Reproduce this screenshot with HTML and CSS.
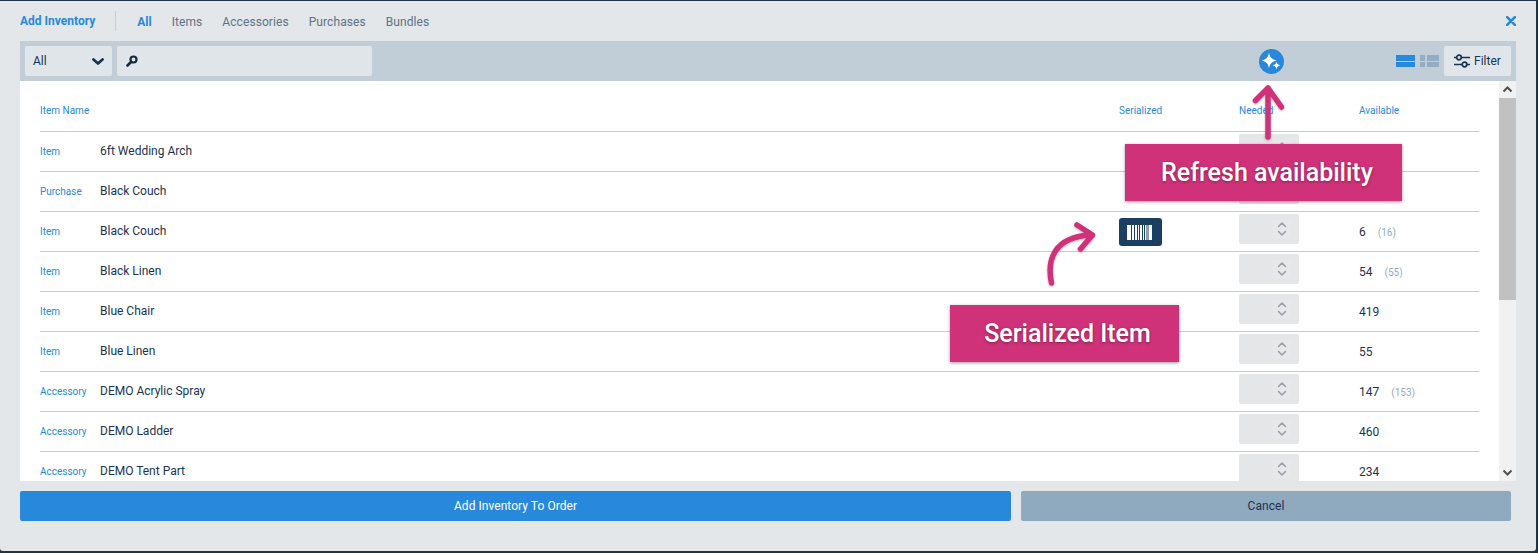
FILE: index.html
```html
<!DOCTYPE html>
<html lang="en">
<head>
<meta charset="utf-8">
<title>Add Inventory</title>
<link rel="stylesheet" href="styles.css">
</head>
<body>
<svg class="defs" width="0" height="0" aria-hidden="true">
  <symbol id="spin" viewBox="0 0 18 18">
    <path d="M5.500 6.500 9 3l3.500 3.500M5.500 11.500 9 15l3.500-3.500" fill="none" stroke="#9a9ca6" stroke-width="1.500" stroke-linecap="round" stroke-linejoin="round"/>
  </symbol>
</svg>
<main class="modal">
  <header class="topbar">
    <h1 class="title">Add Inventory</h1>
    <nav class="tabs">
      <a class="tab active">All</a>
      <a class="tab">Items</a>
      <a class="tab">Accessories</a>
      <a class="tab">Purchases</a>
      <a class="tab">Bundles</a>
    </nav>
    <svg class="close" viewBox="0 0 10 10" width="10" height="10"><path d="M1.200 1.200l7.600 7.600M8.800 1.200 1.200 8.800" stroke="#2889dc" stroke-width="2.600" stroke-linecap="round"/></svg>
  </header>

  <section class="toolbar">
    <div class="select">
      <span>All</span>
      <svg viewBox="0 0 12 7" width="12" height="7"><path d="M1.500 1.500 6 5.500l4.500-4" fill="none" stroke="#1b3350" stroke-width="2.800" stroke-linecap="round" stroke-linejoin="round"/></svg>
    </div>
    <div class="search">
      <svg viewBox="0 0 12 12" width="12" height="12"><circle cx="7.500" cy="4.500" r="3" fill="none" stroke="#16293f" stroke-width="2.200"/><path d="M5 7 1.500 10.500" stroke="#16293f" stroke-width="2.600" stroke-linecap="round"/></svg>
    </div>
    <button class="spark">
      <svg viewBox="0 0 25 25" width="25" height="25"><circle cx="12.500" cy="12.500" r="12.500" fill="#2889dc"/><path d="M10 4c1 4.400 2.600 6.300 7.500 7.500C12.600 12.700 11 14.600 10 19c-1-4.400-2.600-6.300-7.500-7.500C7.400 10.300 9 8.400 10 4z" fill="#fff"/><path d="M17.500 12.800c.4 2 1.300 3 3.800 3.700-2.500.7-3.400 1.700-3.800 3.700-.4-2-1.300-3-3.800-3.700 2.500-.7 3.400-1.700 3.800-3.700z" fill="#fff"/></svg>
    </button>
    <div class="views">
      <span class="view-list"><i></i><i></i></span>
      <span class="view-grid"><i></i><i></i><i></i><i></i></span>
    </div>
    <button class="filter">
      <svg viewBox="0 0 16 14" width="16" height="14"><path d="M0 3.500h16M0 10.500h16" stroke="#1b3350" stroke-width="1.700"/><circle cx="5" cy="3.500" r="2.300" fill="#e0e5e9" stroke="#1b3350" stroke-width="1.700"/><circle cx="10.500" cy="10.500" r="2.300" fill="#e0e5e9" stroke="#1b3350" stroke-width="1.700"/></svg>
      <span>Filter</span>
    </button>
  </section>

  <section class="content">
    <div class="list">
      <div class="row head">
        <span>Item Name</span><span></span><span>Serialized</span><span>Needed</span><span>Available</span>
      </div>
      <div class="row">
        <span class="type">Item</span><span class="name">6ft Wedding Arch</span><span></span>
        <span class="qty"><span class="spin"><svg width="18" height="18"><use href="#spin"/></svg></span></span><span class="avail"></span>
      </div>
      <div class="row">
        <span class="type">Purchase</span><span class="name">Black Couch</span><span></span>
        <span class="qty"><span class="spin"><svg width="18" height="18"><use href="#spin"/></svg></span></span><span class="avail"></span>
      </div>
      <div class="row">
        <span class="type">Item</span><span class="name">Black Couch</span>
        <span><span class="barcode">
          <svg viewBox="0 0 25 15" width="25" height="15"><path d="M0 0h4v15H0zM5 0h2v15H5zM8 0h2v15H8zM11 0h1v15h-1zM13 0h2v15h-2zM16 0h1v15h-1zM18 0h1.500v15H18zM20.500 0h1v15h-1zM22 0h3v15h-3z" fill="#fff"/></svg>
        </span></span>
        <span class="qty"><span class="spin"><svg width="18" height="18"><use href="#spin"/></svg></span></span><span class="avail">6<small>(16)</small></span>
      </div>
      <div class="row">
        <span class="type">Item</span><span class="name">Black Linen</span><span></span>
        <span class="qty"><span class="spin"><svg width="18" height="18"><use href="#spin"/></svg></span></span><span class="avail">54<small>(55)</small></span>
      </div>
      <div class="row">
        <span class="type">Item</span><span class="name">Blue Chair</span><span></span>
        <span class="qty"><span class="spin"><svg width="18" height="18"><use href="#spin"/></svg></span></span><span class="avail">419</span>
      </div>
      <div class="row">
        <span class="type">Item</span><span class="name">Blue Linen</span><span></span>
        <span class="qty"><span class="spin"><svg width="18" height="18"><use href="#spin"/></svg></span></span><span class="avail">55</span>
      </div>
      <div class="row">
        <span class="type">Accessory</span><span class="name">DEMO Acrylic Spray</span><span></span>
        <span class="qty"><span class="spin"><svg width="18" height="18"><use href="#spin"/></svg></span></span><span class="avail">147<small>(153)</small></span>
      </div>
      <div class="row">
        <span class="type">Accessory</span><span class="name">DEMO Ladder</span><span></span>
        <span class="qty"><span class="spin"><svg width="18" height="18"><use href="#spin"/></svg></span></span><span class="avail">460</span>
      </div>
      <div class="row">
        <span class="type">Accessory</span><span class="name">DEMO Tent Part</span><span></span>
        <span class="qty"><span class="spin"><svg width="18" height="18"><use href="#spin"/></svg></span></span><span class="avail">234</span>
      </div>
    </div>
    <div class="scrollbar">
      <svg class="sb-btn" viewBox="0 0 17 17" width="17" height="17"><path d="M4.500 10.500 8.500 6.500l4 4" fill="none" stroke="#505050" stroke-width="2"/></svg>
      <div class="sb-track"><div class="sb-thumb"></div></div>
      <svg class="sb-btn" viewBox="0 0 17 17" width="17" height="17"><path d="M4.500 6.500 8.500 10.500l4-4" fill="none" stroke="#505050" stroke-width="2"/></svg>
    </div>
  </section>

  <footer class="actions">
    <button class="btn primary">Add Inventory To Order</button>
    <button class="btn secondary">Cancel</button>
  </footer>

  <svg class="arrows" viewBox="0 0 1538 553" width="1538" height="553" aria-hidden="true">
    <defs><filter id="blur" x="-30%" y="-30%" width="160%" height="160%"><feDropShadow dx="0" dy="1" stdDeviation="1.200" flood-color="#000" flood-opacity=".3"/></filter></defs>
    <g fill="none" stroke="#cf3278" stroke-width="5.500" stroke-linecap="round" stroke-linejoin="round" filter="url(#blur)">
      <path d="M1268 137V88M1255.500 100.500 1268 88l13.500 19"/>
      <path d="M1051.500 283c-5-24 3-46 39-48M1077 225l15.500 10-12 14"/>
    </g>
  </svg>
  <div class="callout refresh">Refresh availability</div>
  <div class="callout serialized">Serialized Item</div>
</main>
</body>
</html>
```
FILE: styles.css
```css
* { box-sizing: border-box; }
html, body { margin: 0; height: 100%; }
body {
  background: #1f3347;
  font-family: Roboto, "Liberation Sans", sans-serif;
  overflow: hidden;
  color: #1b3350;
}
.defs { position: absolute; }
.modal {
  position: relative;
  width: 1536px;
  height: 550px;
  margin-top: 1px;
  padding: 0 20px;
  background: #e3e7e9;
  border-radius: 0 0 3px 3px;
}
.topbar {
  height: 40px;
  display: flex;
  align-items: center;
}
.title {
  margin: 0;
  padding: 2px 20px 0 0;
  height: 20px;
  line-height: 17px;
  font-size: 12px;
  font-weight: 700;
  color: #2889dc;
  border-right: 1px solid #c1ced7;
}
.tabs { display: flex; gap: 20px; padding: 2px 0 0 21px; }
.tab { font-size: 12px; letter-spacing: .08px; color: #5f7286; }
.tab.active { color: #2889dc; font-weight: 700; letter-spacing: 0; }
.close { margin-left: auto; }
.toolbar {
  height: 40px;
  padding: 5px;
  display: flex;
  align-items: center;
  gap: 5px;
  background: #c1ced7;
}
.toolbar > * { flex: none; }
.select, .search, .filter {
  height: 30px;
  background: #e0e5e9;
  border-radius: 2px;
  display: flex;
  align-items: center;
}
.select {
  width: 87px;
  padding: 0 8px;
  justify-content: space-between;
  font-size: 12px;
}
.search { width: 255px; padding-left: 9px; }
.spark {
  margin-left: 882px;
  width: 25px;
  height: 25px;
  padding: 0;
  border: 0;
  background: none;
  display: block;
}
.views { margin-left: 107px; display: flex; gap: 5px; }
.view-list { width: 19px; display: grid; gap: 1px; }
.view-list i { height: 5.500px; background: #2889dc; }
.view-grid { width: 19px; display: grid; grid-template-columns: 5px 12px; gap: 1px 2px; }
.view-grid i { height: 5.500px; background: #94adc3; }
.filter {
  width: 67px;
  padding: 0 0 0 10px;
  gap: 4px;
  border: 0;
  font: 12px Roboto, "Liberation Sans", sans-serif;
  color: #1b3350;
}
.content {
  height: 400px;
  display: flex;
  background: #fff;
  overflow: hidden;
}
.list { flex: 1; padding: 0 20px; min-width: 0; }
.row {
  height: 40px;
  display: grid;
  grid-template-columns: 60px 1019px 120px 120px 120px;
  align-items: center;
  border-bottom: 1px solid #c1ced7;
  font-size: 12px;
}
.head {
  height: 51px;
  padding-top: 8px;
  font-size: 10px;
  color: #2889dc;
}
.type { font-size: 10px; color: #2889dc; }
.name { color: #1b3350; padding-bottom: 1px; }
.barcode {
  width: 43px;
  height: 28px;
  margin-top: 1px;
  background: #1b3f60;
  border-radius: 3px;
  display: flex;
  align-items: center;
  justify-content: center;
  padding-right: 2px;
}
.qty {
  width: 60px;
  height: 30px;
  align-self: start;
  margin-top: 2px;
  background: #e4e6e8;
  border-radius: 2px;
  display: flex;
  justify-content: flex-end;
  align-items: flex-start;
  padding: 6px 8px 0 0;
}
.spin { display: block; width: 18px; height: 18px; background: #e8e8ea; }
.spin svg { display: block; }
.avail { padding-top: 1px; }
.avail small { margin-left: 12px; font-size: 10px; color: #94adc3; }
.scrollbar {
  width: 17px;
  display: flex;
  flex-direction: column;
  background: #f1f1f1;
}
.sb-btn { display: block; flex: none; }
.sb-track { flex: 1; }
.sb-thumb { height: 202px; background: #c1c1c1; }
.actions {
  display: flex;
  gap: 10px;
  padding: 10px 5px 0 0;
}
.btn {
  height: 30px;
  border: 0;
  border-radius: 2px;
  font: 400 12px Roboto, "Liberation Sans", sans-serif;
  letter-spacing: .05px;
}
.primary { width: 991px; background: #2889dc; color: #fff; }
.secondary { width: 490px; background: #8fa9bf; color: #1b3350; }
.arrows { position: absolute; left: 0; top: -1px; pointer-events: none; }
.callout {
  position: absolute;
  height: 57px;
  padding-left: 6px;
  display: flex;
  align-items: center;
  justify-content: center;
  background: #cf3278;
  color: #fff;
  font-size: 25px;
  font-weight: 500;
  text-shadow: 0 1px 3px rgba(0, 0, 0, .35);
  box-shadow: 0 1px 3px rgba(0, 0, 0, .4);
}
.refresh { left: 1125px; top: 143px; width: 277px; padding-left: 7px; }
.serialized { left: 950px; top: 304px; width: 229px; }
```
